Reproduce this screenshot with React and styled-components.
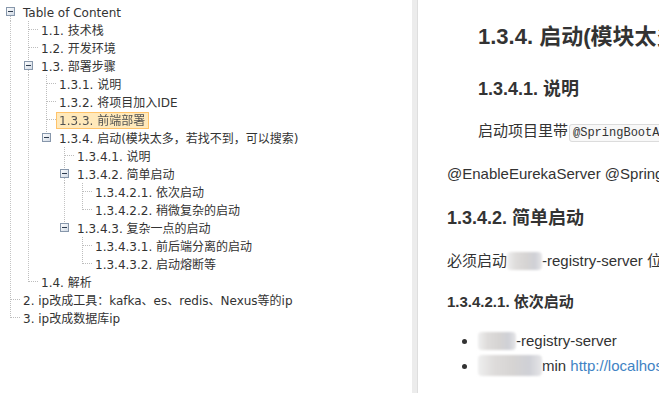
import React from "react";
import styled, { createGlobalStyle } from "styled-components";

const Global = createGlobalStyle`
  html, body { margin: 0; padding: 0; background: #fff; }
  #root { height: 393px; }
`;

const Page = styled.div`
  display: flex;
  height: 393px;
  overflow: hidden;
`;

const TreePanel = styled.div`
  width: 410px;
  padding: 3px 0 0 2px;
  font-family: "DejaVu Sans", "Noto Sans CJK SC", sans-serif;
  font-size: 12px;
  color: #333;
  white-space: nowrap;
  overflow: hidden;
`;

const Divider = styled.div`
  width: 5px;
  background: #ececec;
  border-right: 1px solid #dedede;
`;

const Content = styled.div`
  flex: 1;
  overflow: hidden;
  padding-left: 29px;
  white-space: nowrap;
  font-family: "Liberation Sans", "Noto Sans CJK SC", sans-serif;
  color: #333;
`;

const List = styled.ul`
  list-style: none;
  margin: 0;
  padding: 0 0 0 ${(p) => (p.$nested ? 18 : 0)}px;
  background-image: ${(p) =>
    p.$line ? "repeating-linear-gradient(to bottom, #c4c4c4 0 1px, transparent 1px 2px)" : "none"};
  background-size: 1px 100%;
  background-position: 8px 0;
  background-repeat: no-repeat;
`;

const Row = styled.div`
  display: flex;
  align-items: flex-start;
  height: 18px;
`;

const Label = styled.span`
  display: inline-block;
  margin-top: 1px;
  height: 15px;
  line-height: 16px;
  padding: 0 3px 0 2px;
  border: 1px solid ${(p) => (p.$sel ? "#FFB951" : "transparent")};
  background: ${(p) => (p.$sel ? "#FFE6B0" : "transparent")};
  opacity: ${(p) => (p.$sel ? 0.85 : 1)};
`;

const SwitchBox = styled.svg`
  flex: none;
  width: 18px;
  height: 18px;
  display: block;
`;

function Switch({ type }) {
  const dot = { stroke: "#bdbdbd", strokeWidth: 1, strokeDasharray: "1 1" };
  const open = type.endsWith("open");
  return (
    <SwitchBox viewBox="0 0 18 18">
      <defs>
        <linearGradient id="bx" x1="0" y1="0" x2="1" y2="1">
          <stop offset="0" stopColor="#ffffff" />
          <stop offset="1" stopColor="#cfd8e4" />
        </linearGradient>
      </defs>
      {type === "center_docu" && <line x1="8.5" y1="0" x2="8.5" y2="18" {...dot} />}
      {type === "bottom_docu" && <line x1="8.5" y1="0" x2="8.5" y2="9" {...dot} />}
      {!open && <line x1="9" y1="8.5" x2="18" y2="8.5" {...dot} />}
      {(type === "center_open" || type === "bottom_open") && (
        <line x1="8.5" y1="0" x2="8.5" y2="4" {...dot} />
      )}
      {(type === "center_open" || type === "roots_open") && (
        <line x1="8.5" y1="13" x2="8.5" y2="18" {...dot} />
      )}
      {open && (
        <>
          <rect x="4.5" y="4.5" width="8" height="8" fill="url(#bx)" stroke="#8797ab" />
          <rect x="6" y="8" width="5" height="1" fill="#2d3b4e" />
        </>
      )}
    </SwitchBox>
  );
}

const tree = [
  {
    t: "Table of Content",
    c: [
      { t: "1.1. 技术栈" },
      { t: "1.2. 开发环境" },
      {
        t: "1.3. 部署步骤",
        c: [
          { t: "1.3.1. 说明" },
          { t: "1.3.2. 将项目加入IDE" },
          { t: "1.3.3. 前端部署", sel: true },
          {
            t: "1.3.4. 启动(模块太多，若找不到，可以搜索)",
            c: [
              { t: "1.3.4.1. 说明" },
              {
                t: "1.3.4.2. 简单启动",
                c: [{ t: "1.3.4.2.1. 依次启动" }, { t: "1.3.4.2.2. 稍微复杂的启动" }],
              },
              {
                t: "1.3.4.3. 复杂一点的启动",
                c: [{ t: "1.3.4.3.1. 前后端分离的启动" }, { t: "1.3.4.3.2. 启动熔断等" }],
              },
            ],
          },
        ],
      },
      { t: "1.4. 解析" },
    ],
  },
  { t: "2. ip改成工具：kafka、es、redis、Nexus等的ip" },
  { t: "3. ip改成数据库ip" },
];

function Nodes({ items, root }) {
  return items.map((n, i) => {
    const last = i === items.length - 1;
    let type;
    if (n.c) type = root && i === 0 ? "roots_open" : last ? "bottom_open" : "center_open";
    else type = last ? "bottom_docu" : "center_docu";
    return (
      <li key={n.t}>
        <Row>
          <Switch type={type} />
          <Label $sel={n.sel}>{n.t}</Label>
        </Row>
        {n.c && (
          <List $nested $line={!last}>
            <Nodes items={n.c} />
          </List>
        )}
      </li>
    );
  });
}

const H2 = styled.h2`
  margin: 22px 0 0 31px;
  font-size: 22px;
  line-height: 30px;
  font-weight: bold;
  color: #333;
`;

const H3 = styled.h3`
  margin: ${(p) => p.$top}px 0 0 ${(p) => p.$indent || 0}px;
  font-size: 18px;
  line-height: 26px;
  font-weight: bold;
  color: #333;
`;

const H4 = styled.h4`
  margin: 19px 0 0 0;
  font-size: 15px;
  line-height: 20px;
  font-weight: bold;
  color: #333;
`;

const P = styled.p`
  margin: ${(p) => p.$top}px 0 0 ${(p) => p.$indent || 0}px;
  font-size: 15px;
  line-height: 24px;
  color: #333;
`;

const Code = styled.code`
  margin-left: 1px;
  padding: 1px 3px;
  font-family: "Liberation Mono", monospace;
  font-size: 12px;
  background: #f8f8f8;
  border: 1px solid #dcdcdc;
  border-radius: 3px;
  color: #333;
`;

const Redact = styled.span`
  display: inline-block;
  vertical-align: middle;
  width: ${(p) => p.$w}px;
  height: ${(p) => p.$h}px;
  margin-top: -3px;
  border-radius: 4px;
  background: linear-gradient(90deg, #efefef 0%, #dedcdb 25%, #d6d4d3 55%, #cfd0d6 80%, #e6e6e8 100%);
  filter: blur(1.2px);
`;

const Bullets = styled.ul`
  margin: 16px 0 0 0;
  padding-left: 31px;
  list-style: disc;
  font-size: 15px;
  line-height: 25px;
  color: #333;
`;

const Link = styled.a`
  color: #4183c4;
  text-decoration: none;
`;

export default function App() {
  return (
    <>
      <Global />
      <Page>
        <TreePanel>
          <List>
            <Nodes items={tree} root />
          </List>
        </TreePanel>
        <Divider />
        <Content>
          <H2>1.3.4. 启动(模块太多，若找不到，可以搜索)</H2>
          <H3 $top={24} $indent={31}>1.3.4.1. 说明</H3>
          <P $top={17} $indent={31}>
            启动项目里带<Code>@SpringBootApplication</Code>
          </P>
          <P $top={17}>@EnableEurekaServer @SpringBootApplication</P>
          <H3 $top={19}>1.3.4.2. 简单启动</H3>
          <P $top={18}>
            必须启动<Redact $w={35} $h={18} />-registry-server 位于
          </P>
          <H4>1.3.4.2.1. 依次启动</H4>
          <Bullets>
            <li>
              <Redact $w={38} $h={18} />-registry-server
            </li>
            <li>
              <Redact $w={64} $h={21} />min <Link>http://localhost:8080</Link>
            </li>
          </Bullets>
        </Content>
      </Page>
    </>
  );
}
